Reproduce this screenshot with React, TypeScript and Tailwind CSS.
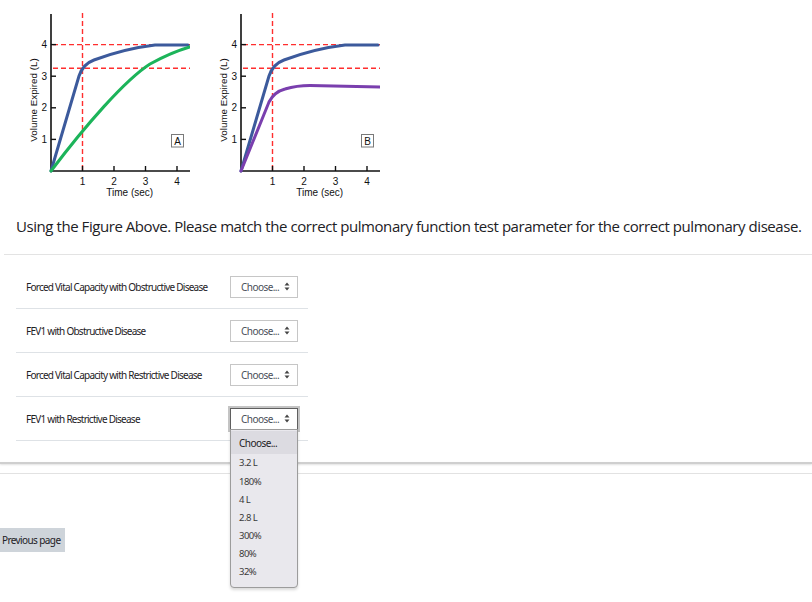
import React from 'react';

const X = (t: number) => 51 + 31.5 * t;
const Y = (v: number) => 171 - 31.6 * v;

function Chart({ kind }: { kind: 'A' | 'B' }) {
  return (
    <svg width="190" height="200" viewBox="0 0 190 200" className="block shrink-0" fontFamily="'Liberation Sans', Arial, sans-serif">
      {/* red guide lines */}
      <g stroke="#ff2e2e" strokeWidth="1.4" strokeDasharray="5 3" fill="none">
        <line x1={X(1)} y1="13" x2={X(1)} y2="171" />
        <line x1="53" y1={Y(4)} x2="193" y2={Y(4)} />
        <line x1="53" y1={Y(3.25)} x2="195" y2={Y(3.25)} />
      </g>

      {/* axes */}
      <path d="M51 14 V171 H208" stroke="#111" strokeWidth="1.6" fill="none" />
      {[1, 2, 3, 4].map((v) => (
        <g key={v}>
          <line x1="51" x2="56" y1={Y(v)} y2={Y(v)} stroke="#111" strokeWidth="1.4" />
          <text x="47" y={Y(v) + 3.5} fontSize="10" textAnchor="end" fill="#111">{v}</text>
          <line x1={X(v)} x2={X(v)} y1="166" y2="171" stroke="#111" strokeWidth="1.4" />
          <text x={X(v)} y="185" fontSize="10" textAnchor="middle" fill="#111">{v}</text>
        </g>
      ))}
      <text x={X(2.5)} y="196" fontSize="10" textAnchor="middle" fill="#111">Time (sec)</text>
      <text transform="translate(37 100) rotate(-90)" fontSize="9.8" textAnchor="middle" fill="#111">Volume Expired (L)</text>

      {/* curves */}
      <path d="M51 171 L79 76 Q83 64 94 60 C110 54 130 48 155 45 L188 45" stroke="#3c5a9c" strokeWidth="3" fill="none" strokeLinecap="round" />
      {kind === 'A' ? (
        <path d="M51 171 C85 126 125 80 150 64 C168 54 182 49 193 46" stroke="#1cb45a" strokeWidth="3" fill="none" strokeLinecap="round" />
      ) : (
        <path d="M51 171 L79 102 Q84 92 95 89 C105 86 110 85.5 120 85.5 L191 87" stroke="#7a3fae" strokeWidth="3" fill="none" strokeLinecap="round" />
      )}

      <rect x="171.5" y="134.5" width="12" height="12.5" fill="#fff" stroke="#7a7a7a" strokeWidth="1" />
      <text x="177.5" y="144.5" fontSize="10" textAnchor="middle" fill="#111">{kind}</text>
    </svg>
  );
}

function Arrows() {
  return (
    <svg width="6" height="9" viewBox="0 0 6 9" className="shrink-0">
      <path d="M3 0.5 L5.5 3.6 L0.5 3.6 Z" fill="#444" />
      <path d="M3 8.5 L5.5 5.4 L0.5 5.4 Z" fill="#444" />
    </svg>
  );
}

function Select({ focused }: { focused?: boolean }) {
  return (
    <div
      className={
        focused
          ? 'flex h-[22px] w-[68px] shrink-0 items-center justify-between border border-[#5f5f5f] bg-white pl-[10px] pr-[7px] ring-2 ring-[#c4c4c4]'
          : 'flex h-[22px] w-[68px] shrink-0 items-center justify-between border border-[#c6c6c6] bg-white pl-[10px] pr-[7px]'
      }
    >
      <span className="whitespace-nowrap text-[10px] leading-none tracking-[-0.55px] text-[#4a5059]">Choose...</span>
      <Arrows />
    </div>
  );
}

const rows = [
  'Forced Vital Capacity with Obstructive Disease',
  'FEV1 with Obstructive Disease',
  'Forced Vital Capacity with Restrictive Disease',
  'FEV1 with Restrictive Disease',
];

const options = ['3.2 L', '180%', '4 L', '2.8 L', '300%', '80%', '32%'];

export default function App() {
  return (
    <div className="relative h-[602px] w-[812px] overflow-hidden bg-white font-['Noto_Sans',sans-serif] text-[#1d2125]">
      <div className="flex h-[200px]">
        <Chart kind="A" />
        <Chart kind="B" />
      </div>

      <div className="ml-1 h-[55px] border-b border-[#e3e3e3] pl-[12px] pt-[16px]">
        <p className="whitespace-nowrap font-['Open_Sans',sans-serif] text-[15px] leading-[20px] tracking-[-0.44px]">
          Using the Figure Above. Please match the correct pulmonary function test parameter for the correct pulmonary disease.
        </p>
      </div>

      <div className="ml-4 mt-[10px] w-[292px]">
        {rows.map((r, i) => (
          <div key={r} className="flex h-[44px] items-center border-b border-[#dee2e6]">
            <div className="w-[214px] shrink-0 whitespace-nowrap pl-[10px] text-[10px] leading-none tracking-[-0.75px]">{r}</div>
            <Select focused={i === 3} />
          </div>
        ))}
      </div>

      <div className="mt-[21px] h-[2px] bg-[#cfcfcf] shadow-[0_1px_2px_rgba(0,0,0,0.12)]" />
      <div className="mt-[9px] border-b border-[#e2e2e2]" />

      <div className="mt-[54px] flex h-[24px] w-[65px] items-center bg-[#ced4da] pl-[2px] whitespace-nowrap text-[10px] leading-none tracking-[-0.6px]">
        Previous page
      </div>

      <div className="absolute left-[230px] top-[429px] w-[68px] rounded-b-[4px] border border-[#9c9c9c] bg-[#e9e8ed] pb-[6px] pt-[1px] shadow-[0_2px_3px_rgba(0,0,0,0.15)]">
        <div className="flex h-[23px] items-center bg-[#dcdbe1] pl-[8px] pt-[1px] text-[10px] leading-none tracking-[-0.55px] text-[#1d2125]">Choose...</div>
        {options.map((o) => (
          <div key={o} className="flex h-[18.2px] items-center pl-[8px] text-[9.5px] leading-none tracking-[-0.55px] text-[#3a3a3a]">
            {o}
          </div>
        ))}
      </div>
    </div>
  );
}
